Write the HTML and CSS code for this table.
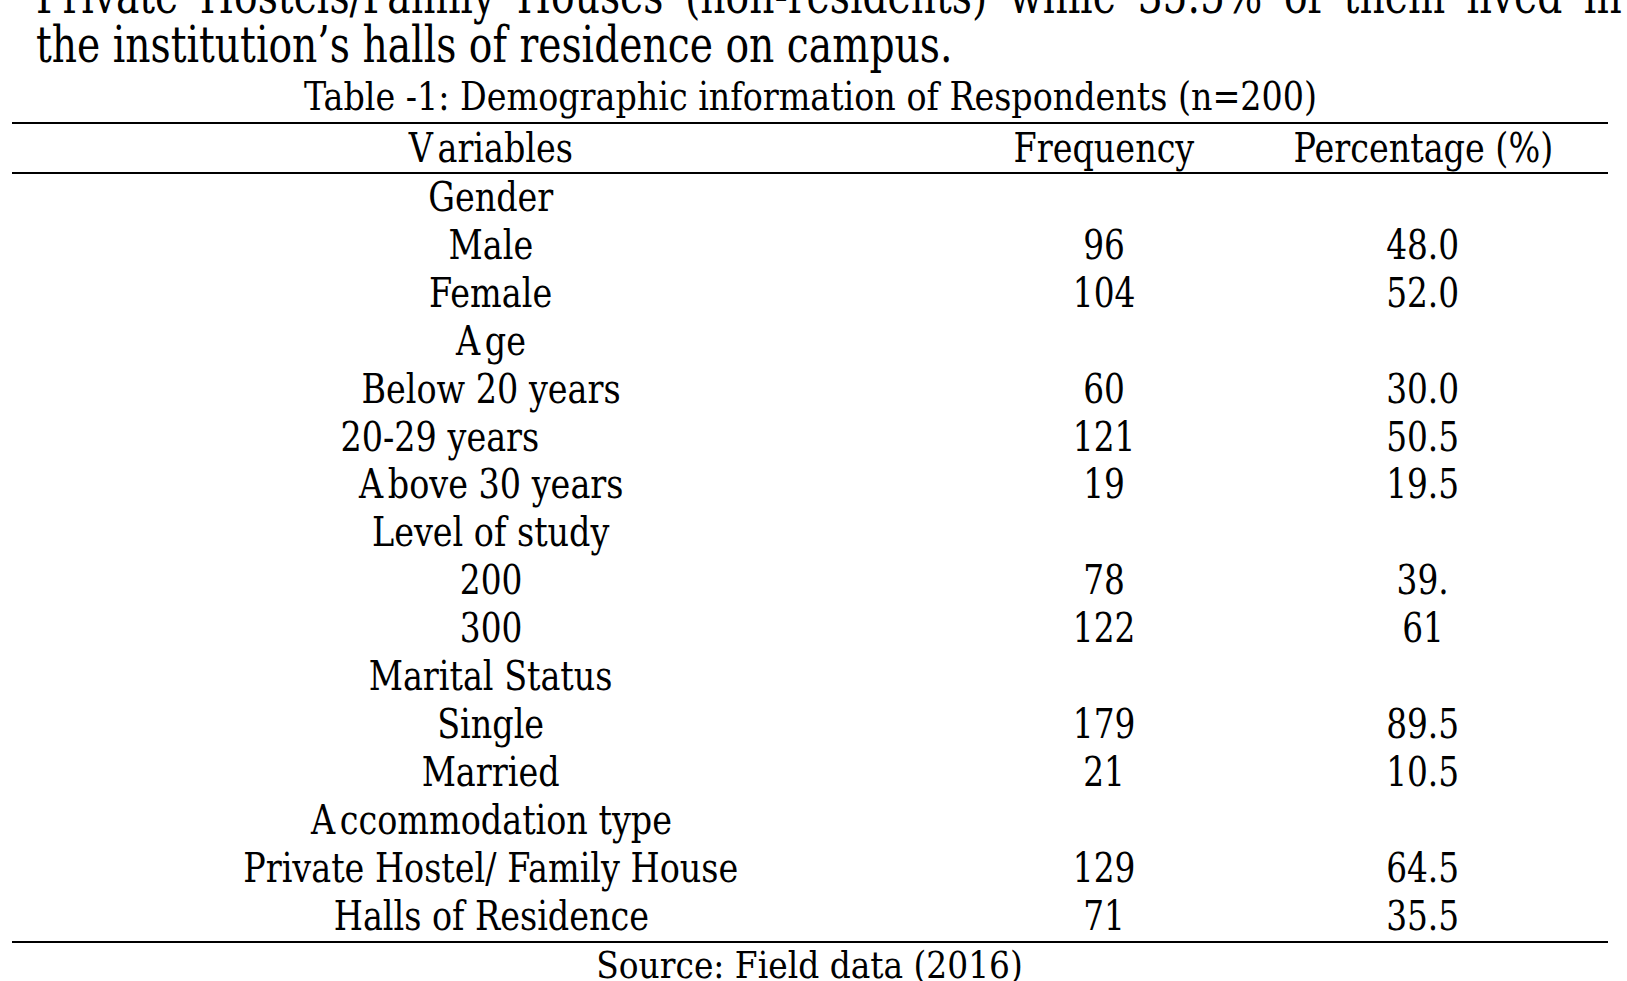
FILE: index.html
```html
<!DOCTYPE html>
<html lang="en">
<head>
<meta charset="utf-8">
<title>Table 1: Demographic information of Respondents</title>
<link rel="stylesheet" href="styles.css">
</head>
<body>
<p class="para">
  <span class="para-line para-line-justify">Private Hostels/Family Houses (non-residents) while 35.5% of them lived in</span>
  <span class="para-line">the institution’s halls of residence on campus.</span>
</p>
<div class="caption"><span class="sx sx-caption">Table -1: Demographic information of Respondents (n=200)</span></div>
<table class="data">
  <colgroup>
    <col class="col-var">
    <col class="col-freq">
    <col class="col-pct">
  </colgroup>
  <thead>
    <tr>
      <th><span class="sx"><span class="kern">V</span>ariables</span></th>
      <th><span class="sx">Frequency</span></th>
      <th><span class="sx">Percentage (%)</span></th>
    </tr>
  </thead>
  <tbody>
    <tr><td><span class="sx">Gender</span></td><td></td><td></td></tr>
    <tr><td><span class="sx">Male</span></td><td><span class="sx num">96</span></td><td><span class="sx num">48.0</span></td></tr>
    <tr><td><span class="sx">Female</span></td><td><span class="sx num">104</span></td><td><span class="sx num">52.0</span></td></tr>
    <tr><td><span class="sx"><span class="kern">A</span>ge</span></td><td></td><td></td></tr>
    <tr><td><span class="sx">Below 20 years</span></td><td><span class="sx num">60</span></td><td><span class="sx num">30.0</span></td></tr>
    <tr><td class="shift-left"><span class="sx">20-29 years</span></td><td><span class="sx num">121</span></td><td><span class="sx num">50.5</span></td></tr>
    <tr><td><span class="sx"><span class="kern">A</span>bove 30 years</span></td><td><span class="sx num">19</span></td><td><span class="sx num">19.5</span></td></tr>
    <tr><td><span class="sx">Level of study</span></td><td></td><td></td></tr>
    <tr><td><span class="sx num">200</span></td><td><span class="sx num">78</span></td><td><span class="sx num">39.</span></td></tr>
    <tr><td><span class="sx num">300</span></td><td><span class="sx num">122</span></td><td><span class="sx num">61</span></td></tr>
    <tr><td><span class="sx">Marital Status</span></td><td></td><td></td></tr>
    <tr><td><span class="sx">Single</span></td><td><span class="sx num">179</span></td><td><span class="sx num">89.5</span></td></tr>
    <tr><td><span class="sx">Married</span></td><td><span class="sx num">21</span></td><td><span class="sx num">10.5</span></td></tr>
    <tr><td><span class="sx"><span class="kern">A</span>ccommodation type</span></td><td></td><td></td></tr>
    <tr><td><span class="sx">Private Hostel/ Family House</span></td><td><span class="sx num">129</span></td><td><span class="sx num">64.5</span></td></tr>
    <tr><td><span class="sx">Halls of Residence</span></td><td><span class="sx num">71</span></td><td><span class="sx num">35.5</span></td></tr>
  </tbody>
</table>
<div class="source"><span class="sx sx-source">Source: Field data (2016)</span></div>
</body>
</html>
```

FILE: styles.css
```css
html {
  overflow: hidden;
  background: #ffffff;
}

body {
  margin: 0;
  color: #000000;
  font-family: "DejaVu Serif", "Liberation Serif", serif;
  font-weight: normal;
}

.sx {
  display: inline-block;
  white-space: pre;
  transform: scaleX(0.815);
  transform-origin: 50% 50%;
}

.sx.num {
  transform: scaleX(0.80);
}

.sx-caption {
  transform: scaleX(0.855);
}

.sx-source {
  transform: scaleX(0.865);
}

.kern {
  margin-right: 0.14em;
}

.para {
  margin: -28px 0 0 36px;
  font-size: 50px;
  line-height: 49px;
}

.para-line {
  display: block;
  white-space: nowrap;
  width: max-content;
  transform: scaleX(0.785);
  transform-origin: 0 50%;
}

.para-line-justify {
  width: 2020px;
  white-space: normal;
  text-align: justify;
  text-align-last: justify;
}

.caption {
  margin-top: 4px;
  font-size: 39px;
  line-height: 45px;
  text-align: center;
  padding-left: 12px;
  width: 1596px;
}

.data {
  margin: 3px 0 0 12px;
  width: 1596px;
  border-collapse: collapse;
  table-layout: fixed;
  font-size: 41px;
  border-top: 2px solid #000000;
  border-bottom: 2px solid #000000;
}

.col-var {
  width: 958px;
}

.col-freq {
  width: 268px;
}

.col-pct {
  width: 370px;
}

.data th,
.data td {
  padding: 0;
  text-align: center;
  font-weight: normal;
  white-space: nowrap;
}

.data th {
  height: 48px;
  line-height: 48px;
  border-bottom: 2px solid #000000;
}

.data td {
  height: 47.9px;
  line-height: 47.9px;
}

.data td.shift-left {
  padding-right: 102px;
}

.source {
  margin-left: 12px;
  width: 1596px;
  text-align: center;
  font-size: 38px;
  line-height: 45px;
}
```
